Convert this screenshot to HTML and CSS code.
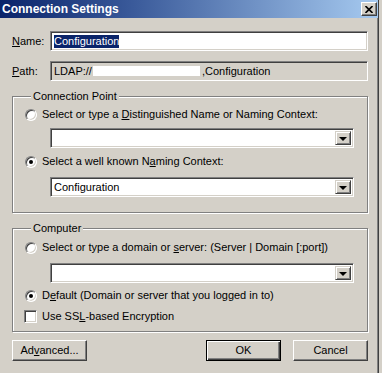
FILE: index.html
```html
<!DOCTYPE html>
<html>
<head>
<meta charset="utf-8">
<link rel="stylesheet" href="styles.css">
</head>
<body>
<div class="window">
  <div class="titlebar">
    <span class="title">Connection Settings</span>
    <span class="close"><svg width="8" height="7" viewBox="0 0 8 7"><path d="M0.5 0 L7.5 7 M7.5 0 L0.5 7" stroke="#000" stroke-width="1.6" fill="none"/></svg></span>
  </div>
  <div class="client">
    <div class="row">
      <span class="lbl"><u>N</u>ame:</span>
      <div class="field edit"><span class="sel">Configuration</span></div>
    </div>
    <div class="row row-path">
      <span class="lbl"><u>P</u>ath:</span>
      <div class="field readonly">LDAP://<span class="redact"></span>,Configuration</div>
    </div>

    <fieldset class="group group-cp">
      <legend>Connection Point</legend>
      <div class="opt opt-1"><span class="radio"></span><span>Select or type a <u>D</u>istinguished Name or Naming Context:</span></div>
      <div class="combo combo-1"><div class="combo-text"></div><div class="drop"><i></i></div></div>
      <div class="opt opt-2"><span class="radio on"></span><span>Select a well known N<u>a</u>ming Context:</span></div>
      <div class="combo combo-2"><div class="combo-text">Configuration</div><div class="drop"><i></i></div></div>
    </fieldset>

    <fieldset class="group group-pc">
      <legend>Computer</legend>
      <div class="opt opt-3"><span class="radio"></span><span>Select or type a domain or <u>s</u>erver: (Server | Domain [:port])</span></div>
      <div class="combo combo-3"><div class="combo-text"></div><div class="drop"><i></i></div></div>
      <div class="opt opt-4"><span class="radio on"></span><span>D<u>e</u>fault (Domain or server that you logged in to)</span></div>
      <div class="opt opt-5"><span class="check"></span><span>Use SS<u>L</u>-based Encryption</span></div>
    </fieldset>

    <div class="buttons">
      <div class="btn">Ad<u>v</u>anced...</div>
      <div class="grow"></div>
      <div class="btn default">OK</div>
      <div class="btn">Cancel</div>
    </div>
  </div>
</div>
</body>
</html>
```

FILE: styles.css
```css
html, body {
  margin: 0;
  padding: 0;
  background: #d4d0c8;
}
body {
  font-family: "Liberation Sans", Arial, sans-serif;
  font-size: 11px;
  line-height: 13px;
  color: #000;
}
.window {
  width: 378px;
  height: 373px;
  background: #d4d0c8;
  border-right: 1px solid #404040;
  box-shadow: inset -1px 0 #808080;
  display: flex;
  flex-direction: column;
}
.titlebar {
  height: 18px;
  background: linear-gradient(to right, #0a246a 0%, #3a5a9a 35%, #a6caf0 100%);
  display: flex;
  align-items: center;
  padding: 0 1px 0 2px;
}
.title {
  flex: 1;
  color: #fff;
  font-weight: bold;
  font-size: 12px;
}
.close {
  width: 16px;
  height: 14px;
  box-sizing: border-box;
  background: #d4d0c8;
  border: 1px solid;
  border-color: #fff #404040 #404040 #fff;
  box-shadow: inset -1px -1px #808080;
  display: flex;
  align-items: center;
  justify-content: center;
}
.close svg { display: block; }
.client {
  flex: 1;
  padding: 13px 10px 0 12px;
  display: flex;
  flex-direction: column;
}
.row {
  display: flex;
  align-items: center;
  height: 20px;
}
.row-path { margin-top: 10px; }
.lbl { width: 38px; }
u { text-decoration: underline; text-underline-offset: 1px; }
.field {
  flex: 1;
  height: 20px;
  box-sizing: border-box;
  border: 1px solid;
  border-color: #808080 #fff #fff #808080;
  box-shadow: inset 1px 1px #404040, inset -1px -1px #d4d0c8;
  padding: 0 3px;
  display: flex;
  align-items: center;
  white-space: nowrap;
}
.edit { background: #fff; }
.readonly { background: #d4d0c8; }
.sel {
  background: #0a246a;
  color: #fff;
}
.redact {
  display: inline-block;
  width: 107px;
  height: 10px;
  background: #fff;
  margin: 0 2px 0 1px;
}
.group {
  margin: 9px 0 0 0;
  padding: 5px 12px 15px 12px;
  border: 1px solid #808080;
  box-shadow: inset 1px 1px #fff, 1px 1px #fff;
  min-width: 0;
}
.group legend {
  padding: 0 2px;
  margin-left: 6px;
  line-height: 13px;
  background: #d4d0c8;
}
.group-pc { padding: 6px 12px 8px 12px; }
.opt {
  display: flex;
  align-items: center;
  height: 13px;
  white-space: nowrap;
}
.radio, .check {
  width: 12px;
  height: 12px;
  box-sizing: border-box;
  background: #fff;
  border: 1px solid;
  border-color: #808080 #fff #fff #808080;
  box-shadow: inset 1px 1px #404040, inset -1px -1px #d4d0c8;
  margin-right: 5px;
  flex: none;
  position: relative;
}
.radio { border-radius: 50%; }
.radio.on::after {
  content: "";
  position: absolute;
  left: 3px;
  top: 3px;
  width: 4px;
  height: 4px;
  border-radius: 50%;
  background: #000;
}
.check {
  width: 13px;
  height: 13px;
  margin-left: -1px;
}
.combo {
  width: 304px;
  height: 20px;
  box-sizing: border-box;
  margin-left: 25px;
  background: #fff;
  border: 1px solid;
  border-color: #808080 #fff #fff #808080;
  box-shadow: inset 1px 1px #404040, inset -1px -1px #d4d0c8;
  padding: 2px;
  display: flex;
}
.combo-text {
  flex: 1;
  padding-left: 1px;
  display: flex;
  align-items: center;
}
.drop {
  width: 16px;
  box-sizing: border-box;
  background: #d4d0c8;
  border: 1px solid;
  border-color: #d4d0c8 #404040 #404040 #d4d0c8;
  box-shadow: inset 1px 1px #fff, inset -1px -1px #808080;
  display: flex;
  align-items: center;
  justify-content: center;
}
.drop i {
  width: 0;
  height: 0;
  border-left: 4px solid transparent;
  border-right: 4px solid transparent;
  border-top: 4px solid #000;
  margin-top: 1px;
}
.combo-1 { margin-top: 7px; }
.opt-2 { margin-top: 7px; }
.combo-2 { margin-top: 9px; }
.combo-3 { margin-top: 9px; }
.opt-4 { margin-top: 6px; }
.opt-5 { margin-top: 8px; }
.buttons {
  display: flex;
  margin-top: 8px;
}
.grow { flex: 1; }
.btn {
  width: 75px;
  height: 21px;
  box-sizing: border-box;
  border: 1px solid;
  border-color: #fff #404040 #404040 #fff;
  box-shadow: inset -1px -1px #808080;
  display: flex;
  align-items: center;
  justify-content: center;
}
.btn.default {
  border: 1px solid #000;
  box-shadow: inset 1px 1px #fff, inset -1px -1px #404040, inset -2px -2px #808080;
  margin-right: 12px;
}
```
